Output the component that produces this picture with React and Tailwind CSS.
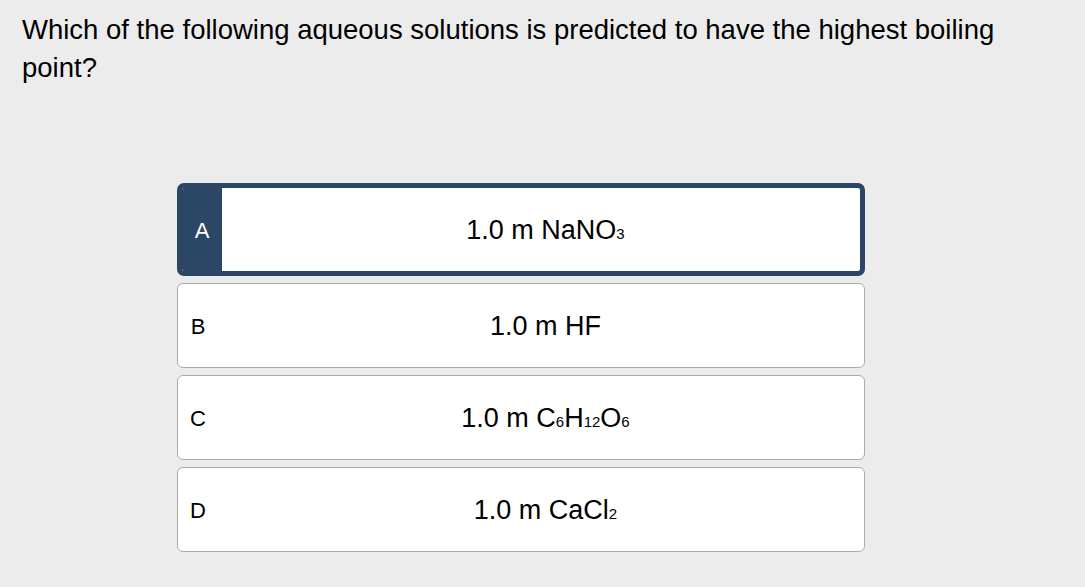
import React from 'react';

const options = [
  { key: 'A', parts: ['1.0 m NaNO', ['3']] },
  { key: 'B', parts: ['1.0 m HF'] },
  { key: 'C', parts: ['1.0 m C', ['6'], 'H', ['12'], 'O', ['6']] },
  { key: 'D', parts: ['1.0 m CaCl', ['2']] },
];

function Formula({ parts }) {
  return (
    <span>
      {parts.map((p, i) =>
        Array.isArray(p) ? (
          <span key={i} className="text-[15px]">{p[0]}</span>
        ) : (
          <span key={i}>{p}</span>
        )
      )}
    </span>
  );
}

export default function App() {
  const selected = 'A';

  return (
    <div
      className="min-h-screen bg-[#ececec] text-black px-[22px] pt-[11px]"
      style={{ fontFamily: '"Liberation Sans", Arial, sans-serif' }}
    >
      <p className="max-w-[1010px] text-[27.5px] leading-[38px]">
        Which of the following aqueous solutions is predicted to have the highest boiling point?
      </p>

      <div className="mt-[96px] ml-[155px] w-[688px] flex flex-col gap-[7px]">
        {options.map((opt) => {
          const active = opt.key === selected;
          return (
            <div
              key={opt.key}
              className={
                active
                  ? 'flex h-[93px] rounded-[7px] border-[5px] border-[#2c4766] bg-white overflow-hidden'
                  : 'flex h-[85px] rounded-[6px] border border-[#ababab] bg-white overflow-hidden'
              }
            >
              <div
                className={
                  active
                    ? 'w-10 flex items-center justify-center pt-px bg-[#2c4766] text-white text-[22px]'
                    : 'w-10 flex items-center justify-center pt-px text-[22px]'
                }
              >
                {opt.key}
              </div>
              <div className="flex-1 flex items-center justify-center pl-[9px] pt-px text-[27px]">
                <Formula parts={opt.parts} />
              </div>
            </div>
          );
        })}
      </div>
    </div>
  );
}
